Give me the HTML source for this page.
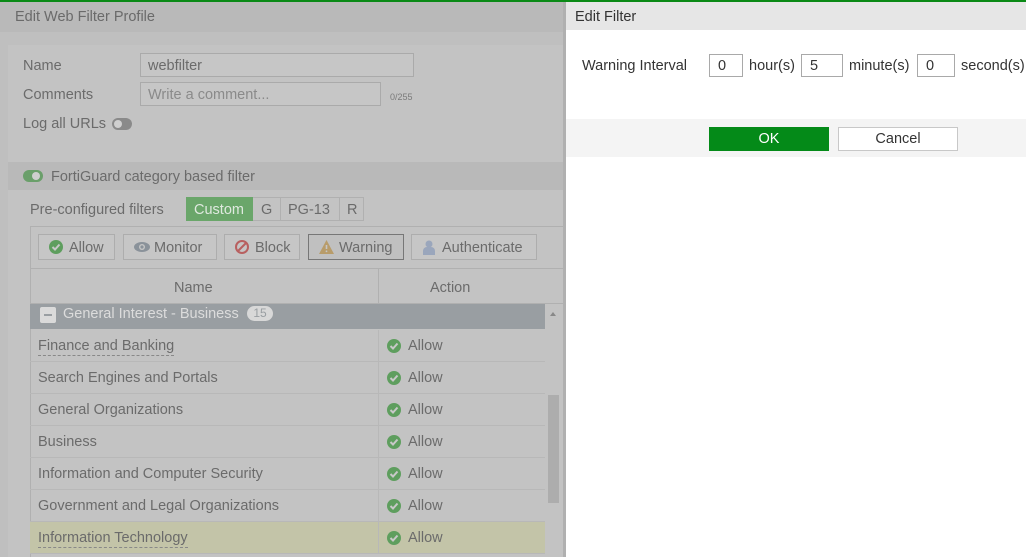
<!DOCTYPE html>
<html><head><meta charset="utf-8"><style>
*{box-sizing:border-box;margin:0;padding:0}
body{width:1026px;height:557px;overflow:hidden;position:relative;background:#bfbfbf;font-family:"Liberation Sans",sans-serif;font-size:14.5px;color:#6b6b6b}
.a{position:absolute}
.t{position:absolute;white-space:nowrap;line-height:18px}
.btn{position:absolute;top:234px;height:26px;border:1px solid #adadad;background:#c6c6c6;color:#6b6b6b;line-height:26px;padding-left:30px}
.btn svg{position:absolute;left:10px;top:5px}
.row{position:absolute;left:30px;width:515px;height:32px;border-bottom:1px solid #b8b8b8}
.row .n{position:absolute;left:8px;top:7px;line-height:18px}
.row .v{position:absolute;left:348px;top:0;height:32px;border-left:1px solid #b8b8b8;width:167px}
.row .v svg{position:absolute;left:8px;top:9px}
.row .v span{position:absolute;left:29px;top:7px;line-height:18px}
.inp{position:absolute;border:1px solid #a9a9a9;background:#fff;color:#333;padding-left:8px;line-height:22px}
</style></head><body>
<div class="a" style="left:0;top:0;width:1026px;height:2px;background:#0a8a16"></div>
<div class="a" style="left:0;top:2px;width:566px;height:30px;background:#b9b9b9"></div>
<div class="t" style="left:15px;top:8px;color:#6a6a6a">Edit Web Filter Profile</div>
<div class="a" style="left:8px;top:45px;width:556px;height:512px;background:#c3c3c3"></div>
<div class="t" style="left:23px;top:57px">Name</div>
<div class="a" style="left:140px;top:53px;width:274px;height:24px;border:1px solid #aaa;background:#c6c6c6"></div>
<div class="t" style="left:148px;top:57px">webfilter</div>
<div class="t" style="left:23px;top:86px">Comments</div>
<div class="a" style="left:140px;top:82px;width:241px;height:24px;border:1px solid #aaa;background:#c6c6c6"></div>
<div class="t" style="left:148px;top:86px;color:#8a8a8a">Write a comment...</div>
<div class="t" style="left:390px;top:92px;font-size:9px;line-height:10px;color:#7a7a7a">0/255</div>
<div class="t" style="left:23px;top:115px">Log all URLs</div>
<div class="a" style="left:112px;top:118px;width:20px;height:12px;border-radius:6px;background:#8a8a8a"></div>
<div class="a" style="left:114px;top:120px;width:8px;height:8px;border-radius:4px;background:#cfcfcf"></div>
<div class="a" style="left:8px;top:162px;width:556px;height:28px;background:#b9b9b9"></div>
<div class="a" style="left:23px;top:170px;width:20px;height:12px;border-radius:6px;background:#6a9f6a"></div>
<div class="a" style="left:32px;top:172px;width:8px;height:8px;border-radius:4px;background:#cfcfcf"></div>
<div class="t" style="left:51px;top:168px">FortiGuard category based filter</div>
<div class="t" style="left:30px;top:201px">Pre-configured filters</div>
<div class="a" style="left:186px;top:197px;width:178px;height:24px;border:1px solid #b0b0b0"></div>
<div class="a" style="left:186px;top:197px;width:67px;height:24px;background:#6aa66a"></div>
<div class="t" style="left:194px;top:201px;color:#dfe9df">Custom</div>
<div class="a" style="left:280px;top:197px;width:1px;height:24px;background:#b0b0b0"></div>
<div class="a" style="left:339px;top:197px;width:1px;height:24px;background:#b0b0b0"></div>
<div class="t" style="left:261px;top:201px">G</div>
<div class="t" style="left:288px;top:201px">PG-13</div>
<div class="t" style="left:347px;top:201px">R</div>
<div class="a" style="left:30px;top:226px;width:534px;height:331px;border-left:1px solid #b0b0b0;border-top:1px solid #b0b0b0"></div>
<div class="btn" style="left:38px;width:77px"><svg width="14" height="14"><circle cx="7" cy="7" r="7" fill="#5e9e5e"/><path d="M3.5 7l2.5 2.5 4.5-5" stroke="#c8c8c8" stroke-width="2" fill="none"/></svg>Allow</div>
<div class="btn" style="left:123px;width:94px"><svg width="16" height="14"><ellipse cx="8" cy="7" rx="8" ry="5" fill="#8a929a"/><circle cx="8" cy="7" r="3" fill="#c6c6c6"/><circle cx="8" cy="7" r="1.6" fill="#8a929a"/></svg>Monitor</div>
<div class="btn" style="left:224px;width:76px"><svg width="14" height="14"><circle cx="7" cy="7" r="6" stroke="#b86060" stroke-width="2" fill="none"/><path d="M3 11L11 3" stroke="#b86060" stroke-width="2"/></svg>Block</div>
<div class="btn" style="left:308px;width:96px;border-color:#777;background:#c0c0c0"><svg width="15" height="14"><path d="M7.5 0L15 14H0z" fill="#b89c6a"/><path d="M7.5 5v4" stroke="#c6c6c6" stroke-width="1.6"/><circle cx="7.5" cy="11.3" r="0.9" fill="#c6c6c6"/></svg>Warning</div>
<div class="btn" style="left:411px;width:126px"><svg width="14" height="15"><circle cx="7" cy="4" r="3.5" fill="#9aa6bc"/><path d="M1 15v-4a4 4 0 0 1 4-4h4a4 4 0 0 1 4 4v4z" fill="#9aa6bc"/></svg>Authenticate</div>
<div class="a" style="left:30px;top:268px;width:534px;height:1px;background:#b0b0b0"></div>
<div class="a" style="left:378px;top:269px;width:1px;height:34px;background:#b0b0b0"></div>
<div class="t" style="left:174px;top:279px">Name</div>
<div class="t" style="left:430px;top:279px">Action</div>
<div class="a" style="left:30px;top:303px;width:534px;height:1px;background:#b0b0b0"></div>
<div class="a" style="left:30px;top:304px;width:515px;height:25px;background:#999ea2"></div>
<div class="a" style="left:40px;top:307px;width:16px;height:16px;border-radius:2px;background:#dadada"></div>
<div class="a" style="left:44px;top:314px;width:8px;height:2px;background:#999ea2"></div>
<div class="t" style="left:63px;top:305px;color:#dcdcdc">General Interest - Business</div>
<div class="a" style="left:247px;top:306px;width:26px;height:15px;border-radius:8px;background:#d8d8d8;color:#999ea2;font-size:12px;line-height:15px;text-align:center">15</div>
<div class="a" style="left:545px;top:304px;width:17px;height:253px;background:#c3c3c3"></div>
<div class="a" style="left:550px;top:312px;width:0;height:0;border-left:3px solid transparent;border-right:3px solid transparent;border-bottom:4px solid #888"></div>
<div class="a" style="left:548px;top:395px;width:11px;height:108px;background:#adadad"></div>
<div class="row" style="top:330px"><div class="n" style="border-bottom:1px dashed #888">Finance and Banking</div><div class="v"><svg width="14" height="14"><circle cx="7" cy="7" r="7" fill="#5e9e5e"/><path d="M3.5 7l2.5 2.5 4.5-5" stroke="#c8c8c8" stroke-width="2" fill="none"/></svg><span>Allow</span></div></div>
<div class="row" style="top:362px"><div class="n">Search Engines and Portals</div><div class="v"><svg width="14" height="14"><circle cx="7" cy="7" r="7" fill="#5e9e5e"/><path d="M3.5 7l2.5 2.5 4.5-5" stroke="#c8c8c8" stroke-width="2" fill="none"/></svg><span>Allow</span></div></div>
<div class="row" style="top:394px"><div class="n">General Organizations</div><div class="v"><svg width="14" height="14"><circle cx="7" cy="7" r="7" fill="#5e9e5e"/><path d="M3.5 7l2.5 2.5 4.5-5" stroke="#c8c8c8" stroke-width="2" fill="none"/></svg><span>Allow</span></div></div>
<div class="row" style="top:426px"><div class="n">Business</div><div class="v"><svg width="14" height="14"><circle cx="7" cy="7" r="7" fill="#5e9e5e"/><path d="M3.5 7l2.5 2.5 4.5-5" stroke="#c8c8c8" stroke-width="2" fill="none"/></svg><span>Allow</span></div></div>
<div class="row" style="top:458px"><div class="n">Information and Computer Security</div><div class="v"><svg width="14" height="14"><circle cx="7" cy="7" r="7" fill="#5e9e5e"/><path d="M3.5 7l2.5 2.5 4.5-5" stroke="#c8c8c8" stroke-width="2" fill="none"/></svg><span>Allow</span></div></div>
<div class="row" style="top:490px"><div class="n">Government and Legal Organizations</div><div class="v"><svg width="14" height="14"><circle cx="7" cy="7" r="7" fill="#5e9e5e"/><path d="M3.5 7l2.5 2.5 4.5-5" stroke="#c8c8c8" stroke-width="2" fill="none"/></svg><span>Allow</span></div></div>
<div class="row" style="top:522px;background:#c3c4a8"><div class="n" style="border-bottom:1px dashed #888">Information Technology</div><div class="v"><svg width="14" height="14"><circle cx="7" cy="7" r="7" fill="#5e9e5e"/><path d="M3.5 7l2.5 2.5 4.5-5" stroke="#c8c8c8" stroke-width="2" fill="none"/></svg><span>Allow</span></div></div>
<div class="a" style="left:563px;top:2px;width:3px;height:555px;background:#b0b0b0"></div>
<div class="a" style="left:566px;top:2px;width:460px;height:555px;background:#fff"></div>
<div class="a" style="left:566px;top:2px;width:460px;height:28px;background:#e6e6e6"></div>
<div class="t" style="left:575px;top:8px;color:#333">Edit Filter</div>
<div class="t" style="left:582px;top:57px;color:#333">Warning Interval</div>
<div class="inp" style="left:709px;top:54px;width:34px;height:23px">0</div>
<div class="t" style="left:749px;top:57px;color:#333">hour(s)</div>
<div class="inp" style="left:801px;top:54px;width:42px;height:23px">5</div>
<div class="t" style="left:849px;top:57px;color:#333">minute(s)</div>
<div class="inp" style="left:917px;top:54px;width:38px;height:23px">0</div>
<div class="t" style="left:961px;top:57px;color:#333">second(s)</div>
<div class="a" style="left:566px;top:119px;width:460px;height:38px;background:#f4f4f4"></div>
<div class="a" style="left:709px;top:127px;width:120px;height:24px;background:#048a18;color:#fff;text-align:center;line-height:24px">OK</div>
<div class="a" style="left:838px;top:127px;width:120px;height:24px;background:#fff;border:1px solid #c8c8c8;color:#333;text-align:center;line-height:22px">Cancel</div>
</body></html>
